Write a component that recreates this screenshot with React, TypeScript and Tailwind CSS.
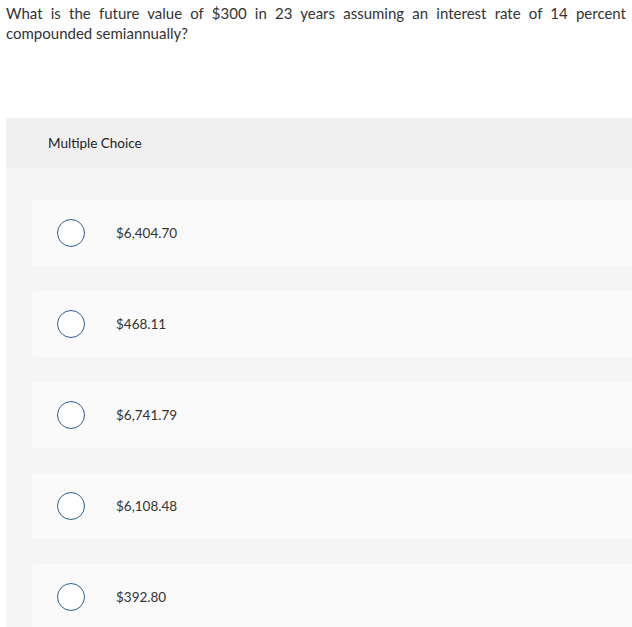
import React from "react";

const options = ["$6,404.70", "$468.11", "$6,741.79", "$6,108.48", "$392.80"];

export default function App() {
  return (
    <div
      className="h-[627px] w-[632px] overflow-hidden bg-white text-[#333333]"
      style={{ fontFamily: "Lato, 'Open Sans', Arial, sans-serif" }}
    >
      <p className="px-[6px] pt-[3px] text-[15px] leading-[20px] text-justify text-[#333333]">
        What is the future value of $300 in 23 years assuming an interest rate of 14 percent compounded semiannually?
      </p>
      <div className="ml-[6px] mt-[75px] bg-[#f5f5f5]">
        <div className="flex h-[50px] items-center bg-[#f0f0f0] pl-[42px] text-[13.5px] text-[#222222]">
          Multiple Choice
        </div>
        <div className="flex flex-col gap-[25px] pl-[26px] pt-[32px]">
          {options.map((o) => (
            <div
              key={o}
              className="flex h-[66px] items-center rounded-l-[3px] bg-[#fafafa] pl-[25px]"
            >
              <span className="h-[28px] w-[28px] shrink-0 rounded-full border-[1.5px] border-[#2f5f8f] bg-white" />
              <span className="ml-[31px] text-[13.5px] text-[#333333]">{o}</span>
            </div>
          ))}
        </div>
      </div>
    </div>
  );
}
